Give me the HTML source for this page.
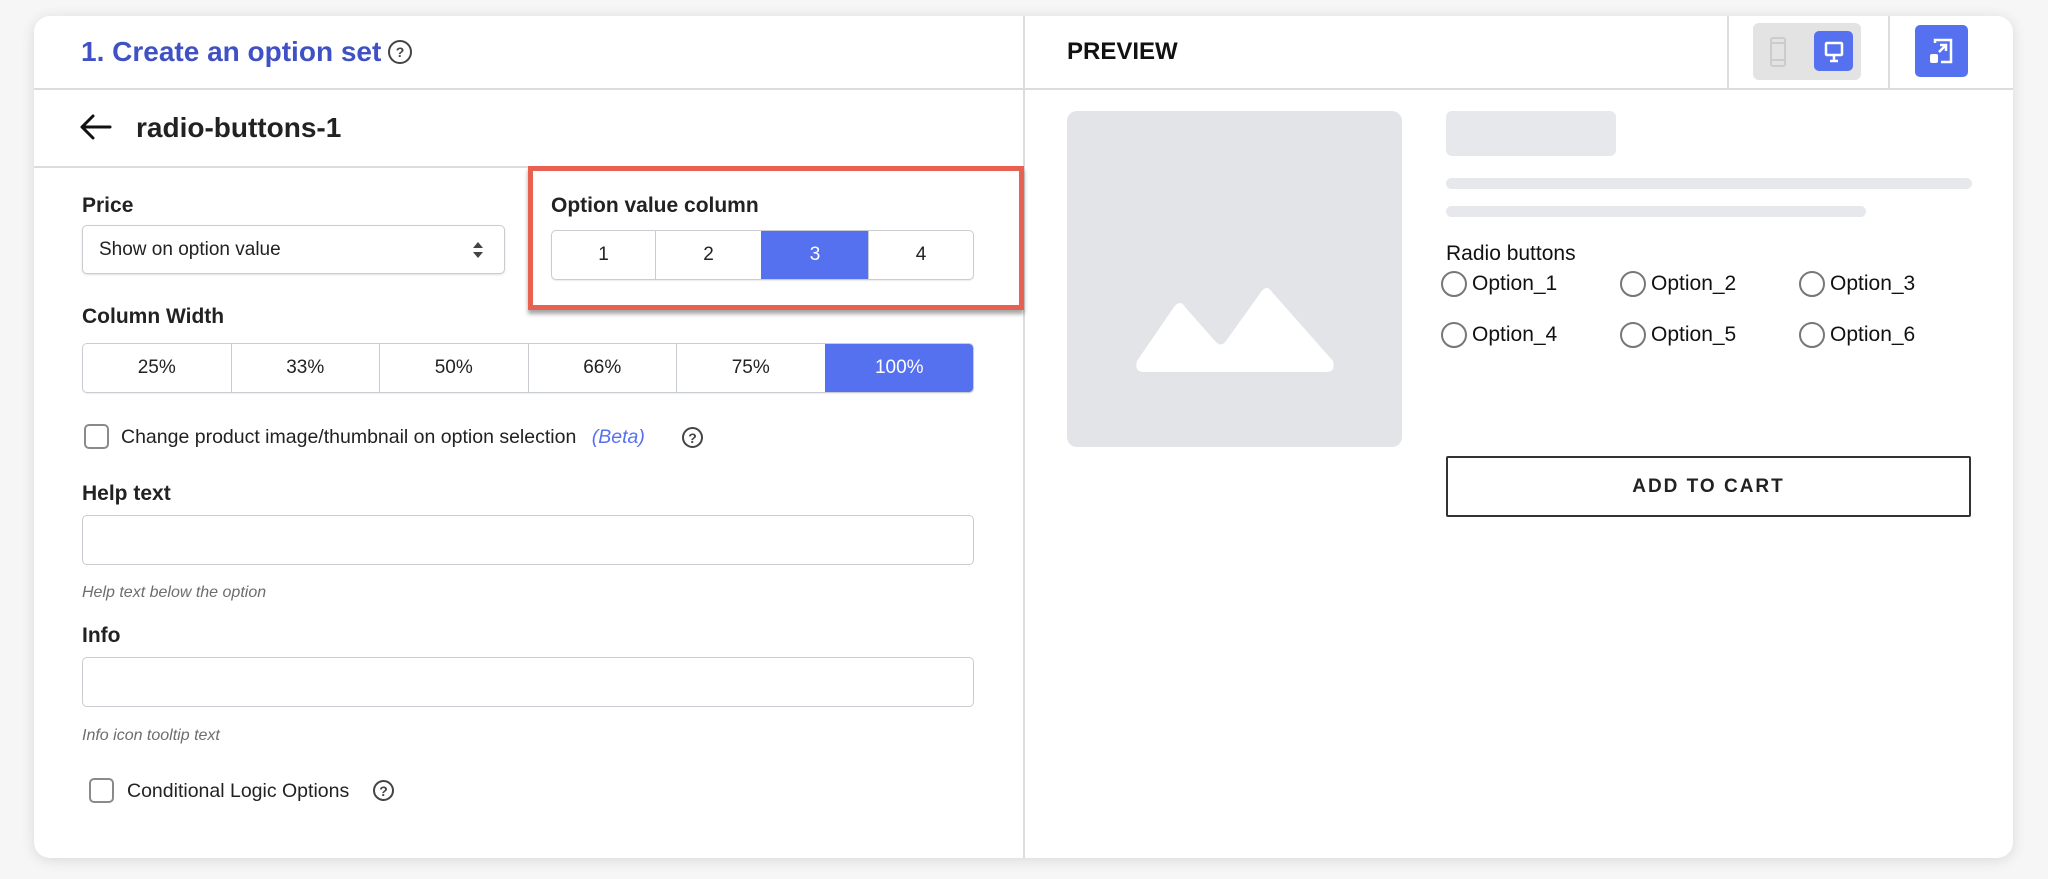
<!DOCTYPE html>
<html><head><meta charset="utf-8"><style>
*{box-sizing:border-box;margin:0;padding:0}
body{width:2048px;height:879px;background:#f6f6f6;font-family:"Liberation Sans",Arial,sans-serif;color:#222;position:relative;overflow:hidden}
.card{position:absolute;left:34px;top:16px;width:1979px;height:842px;background:#fff;border-radius:16px;box-shadow:0 2px 14px rgba(0,0,0,.12);overflow:hidden}
.a{position:absolute}
.hl{position:absolute;height:2px;background:#dcdcdc}
.vl{position:absolute;width:2px;background:#dcdcdc}
.lbl{position:absolute;font-size:21px;font-weight:bold;color:#222}
.seg{position:absolute;display:flex;border:1.5px solid #c9ccd0;border-radius:5px;overflow:hidden;box-shadow:0 1px 1px rgba(0,0,0,.08)}
.seg div{flex:1;display:flex;align-items:center;justify-content:center;font-size:19px;border-left:1.5px solid #c9ccd0;color:#222}
.seg div:first-child{border-left:none}
.seg div.on{background:#5671f0;color:#fff;border-color:#5671f0}
.inp{position:absolute;border:1.5px solid #c9ccd0;border-radius:5px;background:#fff}
.hint{position:absolute;font-size:16px;font-style:italic;color:#6d6d6d}
.cb{position:absolute;width:25px;height:25px;border:2.5px solid #8a8a8a;border-radius:5px}
.q{position:absolute;width:21px;height:21px;border:2.3px solid #444;border-radius:50%;font-size:14px;font-weight:bold;display:flex;align-items:center;justify-content:center;color:#444}
.sk{position:absolute;background:#e6e8eb;border-radius:6px}
.rad{position:absolute;font-size:21px;color:#111;display:flex;align-items:center}
.rad span{display:inline-block;width:26px;height:26px;border:2px solid #777;border-radius:50%;margin-right:5px}
</style></head><body>
<div class="card">
  <div class="hl" style="left:0;top:72px;width:1979px"></div>
  <div class="vl" style="left:989px;top:0;height:842px"></div>
  <div class="hl" style="left:0;top:150px;width:990px"></div>

  <div class="a" style="left:47px;top:0;font-size:28px;font-weight:bold;color:#3f51c4;line-height:72px">1. Create an option set</div>
  <div class="q" style="left:354px;top:24px;width:24px;height:24px">?</div>

  <svg class="a" style="left:44px;top:96px" width="34" height="30" viewBox="0 0 34 30"><path d="M32 15H4M15 4L4 15l11 11" stroke="#111" stroke-width="3" fill="none" stroke-linecap="round" stroke-linejoin="round"/></svg>
  <div class="a" style="left:102px;top:96px;font-size:28px;font-weight:bold;color:#222">radio-buttons-1</div>

  <div class="lbl" style="left:48px;top:178px">Price</div>
  <div class="inp" style="left:48px;top:209px;width:423px;height:49px;box-shadow:0 1px 2px rgba(0,0,0,.12)"></div>
  <div class="a" style="left:65px;top:223px;font-size:19px;color:#222">Show on option value</div>
  <svg class="a" style="left:438px;top:225px" width="12" height="18" viewBox="0 0 12 18"><path d="M6 1L11 7H1Z M6 17L11 11H1Z" fill="#444"/></svg>

  <div class="a" style="left:494px;top:150px;width:496px;height:144px;border:5px solid #e8604f;box-shadow:0 4px 4px rgba(0,0,0,.35)"></div>
  <div class="lbl" style="left:517px;top:178px">Option value column</div>
  <div class="seg" style="left:517px;top:214px;width:423px;height:50px">
    <div style="flex:0 0 103px">1</div><div style="flex:0 0 106px">2</div><div class="on" style="flex:0 0 107px">3</div><div>4</div>
  </div>

  <div class="lbl" style="left:48px;top:289px">Column Width</div>
  <div class="seg" style="left:48px;top:327px;width:892px;height:50px">
    <div>25%</div><div>33%</div><div>50%</div><div>66%</div><div>75%</div><div class="on">100%</div>
  </div>

  <div class="cb" style="left:50px;top:408px"></div>
  <div class="a" style="left:87px;top:410px;font-size:19.5px;color:#222">Change product image/thumbnail on option selection <i style="color:#5671f0;margin-left:10px">(Beta)</i></div>
  <div class="q" style="left:648px;top:411px">?</div>

  <div class="lbl" style="left:48px;top:466px">Help text</div>
  <div class="inp" style="left:48px;top:499px;width:892px;height:50px"></div>
  <div class="hint" style="left:48px;top:568px">Help text below the option</div>

  <div class="lbl" style="left:48px;top:608px">Info</div>
  <div class="inp" style="left:48px;top:641px;width:892px;height:50px"></div>
  <div class="hint" style="left:48px;top:711px">Info icon tooltip text</div>

  <div class="cb" style="left:55px;top:762px"></div>
  <div class="a" style="left:93px;top:764px;font-size:19.5px;color:#222">Conditional Logic Options</div>
  <div class="q" style="left:339px;top:764px">?</div>

  <!-- right -->
  <div class="a" style="left:1033px;top:0;font-size:24px;font-weight:bold;line-height:72px;color:#111">PREVIEW</div>
  <div class="vl" style="left:1693px;top:0;height:72px"></div>
  <div class="vl" style="left:1854px;top:0;height:72px"></div>
  <div class="a" style="left:1719px;top:7px;width:108px;height:57px;background:#e3e3e3;border-radius:6px"></div>
  <svg class="a" style="left:1735px;top:20px" width="18" height="32" viewBox="0 0 18 32"><rect x="2" y="2" width="14" height="28" rx="2" fill="none" stroke="#ccc" stroke-width="2"/><line x1="2" y1="7" x2="16" y2="7" stroke="#ccc" stroke-width="2"/><line x1="2" y1="24" x2="16" y2="24" stroke="#ccc" stroke-width="2"/></svg>
  <div class="a" style="left:1780px;top:15px;width:39px;height:40px;background:#5671f0;border-radius:5px"></div>
  <svg class="a" style="left:1788px;top:24px" width="24" height="24" viewBox="0 0 24 24"><rect x="4" y="3" width="16" height="12" rx="1" fill="none" stroke="#fff" stroke-width="2.5"/><path d="M12 15v5M8 21h8" stroke="#fff" stroke-width="2.5"/></svg>
  <div class="a" style="left:1881px;top:9px;width:53px;height:52px;background:#5671f0;border-radius:5px"></div>
  <svg class="a" style="left:1893px;top:21px" width="28" height="28" viewBox="0 0 28 28"><path d="M8 6V3h16v22H14" fill="none" stroke="#fff" stroke-width="2.5"/><rect x="3" y="17" width="8" height="9" rx="2" fill="#fff"/><path d="M12 15l7-7M13 8h6v6" fill="none" stroke="#fff" stroke-width="2.5"/></svg>

  <div class="a" style="left:1033px;top:95px;width:335px;height:336px;background:#e3e4e7;border-radius:10px"></div>
  <svg class="a" style="left:1100px;top:269px" width="202" height="88" viewBox="0 0 202 88"><path d="M10 87 Q0 87 3 76 L40 22 Q46 14 51 22 L81 56 Q87 63 92 56 L127 7 Q133 -1 138 7 L199 76 Q202 87 192 87 Z" fill="#fff"/></svg>

  <div class="sk" style="left:1412px;top:95px;width:170px;height:45px"></div>
  <div class="sk" style="left:1412px;top:162px;width:526px;height:11px"></div>
  <div class="sk" style="left:1412px;top:190px;width:420px;height:11px"></div>

  <div class="a" style="left:1412px;top:226px;font-size:21px;color:#111">Radio buttons</div>
  <div class="rad" style="left:1407px;top:255px"><span></span>Option_1</div>
  <div class="rad" style="left:1586px;top:255px"><span></span>Option_2</div>
  <div class="rad" style="left:1765px;top:255px"><span></span>Option_3</div>
  <div class="rad" style="left:1407px;top:306px"><span></span>Option_4</div>
  <div class="rad" style="left:1586px;top:306px"><span></span>Option_5</div>
  <div class="rad" style="left:1765px;top:306px"><span></span>Option_6</div>

  <div class="a" style="left:1412px;top:440px;width:525px;height:61px;border:2px solid #333;border-radius:2px;display:flex;align-items:center;justify-content:center;font-size:19px;font-weight:bold;letter-spacing:2px;color:#222">ADD TO CART</div>
</div>
</body></html>
